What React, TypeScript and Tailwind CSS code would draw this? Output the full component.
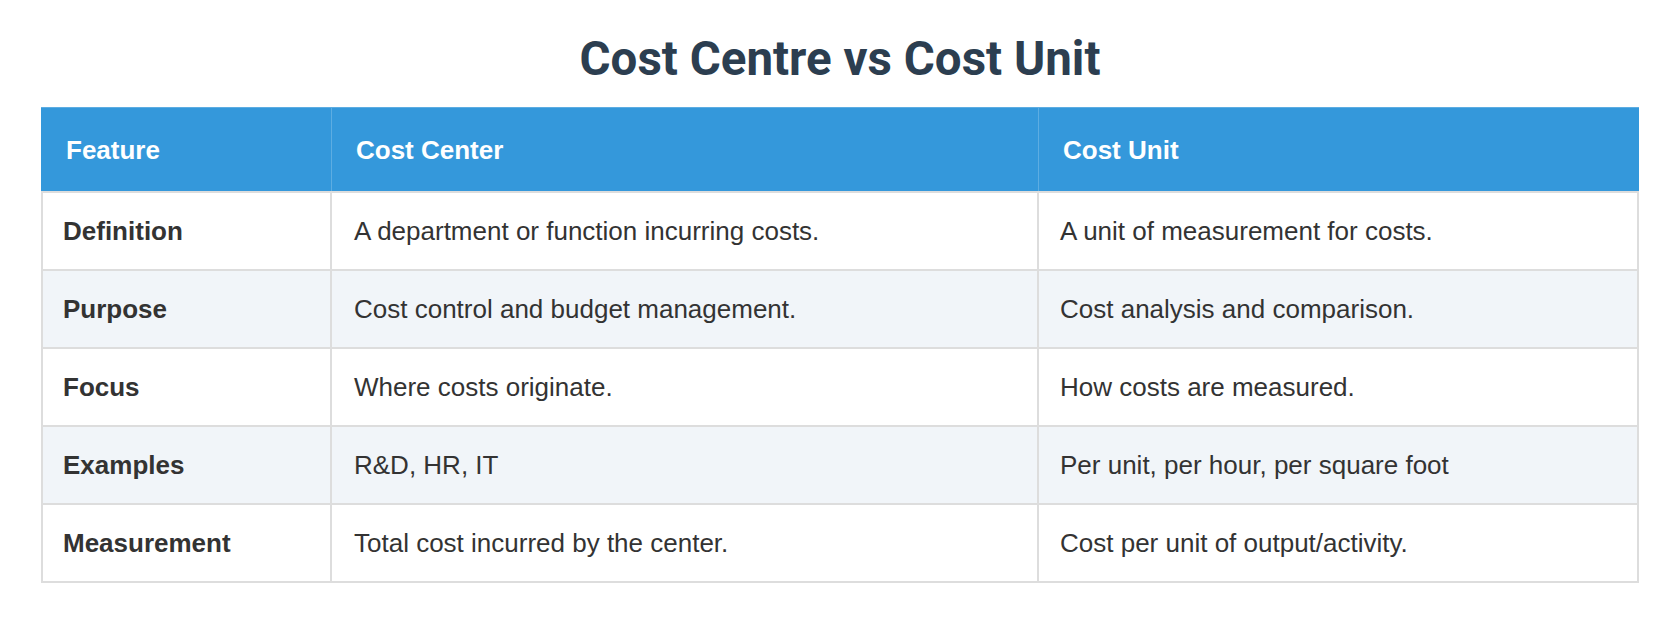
import React from "react";

const rows: [string, string, string][] = [
  ["Definition", "A department or function incurring costs.", "A unit of measurement for costs."],
  ["Purpose", "Cost control and budget management.", "Cost analysis and comparison."],
  ["Focus", "Where costs originate.", "How costs are measured."],
  ["Examples", "R&D, HR, IT", "Per unit, per hour, per square foot"],
  ["Measurement", "Total cost incurred by the center.", "Cost per unit of output/activity."],
];

export default function App() {
  return (
    <div className="w-[1680px] h-[626px] bg-white overflow-hidden">
      <h1
        className="pt-[31px] mb-[19px] text-center text-[47.5px] leading-[57px] font-bold text-[#2c3e50]"
        style={{ fontFamily: "Roboto, 'Liberation Sans', sans-serif" }}
      >
        Cost Centre vs Cost Unit
      </h1>
      <div
        className="mx-[41px] w-[1598px] text-[26px] leading-[30px]"
        style={{ fontFamily: "'Liberation Sans', Arial, sans-serif" }}
      >
        <div className="grid grid-cols-[291px_707px_600px] h-[84px] bg-[#3498db] border-t border-[#5dade2] text-white font-bold">
          <div className="flex items-center pl-[25px] border-r border-[#5dade2]">Feature</div>
          <div className="flex items-center pl-[24px] border-r border-[#5dade2]">Cost Center</div>
          <div className="flex items-center pl-[24px]">Cost Unit</div>
        </div>
        <div className="border-x-2 border-t-2 border-[#dddddd]">
          {rows.map((r, i) => (
            <div
              key={r[0]}
              className={`grid grid-cols-[289px_707px_1fr] h-[78px] border-b-2 border-[#dddddd] text-[#333333] ${
                i % 2 === 1 ? "bg-[#f1f5f9]" : "bg-white"
              }`}
            >
              <div className="flex items-center pl-[20px] font-bold border-r-2 border-[#dddddd]">{r[0]}</div>
              <div className="flex items-center pl-[22px] border-r-2 border-[#dddddd]">{r[1]}</div>
              <div className="flex items-center pl-[21px]">{r[2]}</div>
            </div>
          ))}
        </div>
      </div>
    </div>
  );
}
